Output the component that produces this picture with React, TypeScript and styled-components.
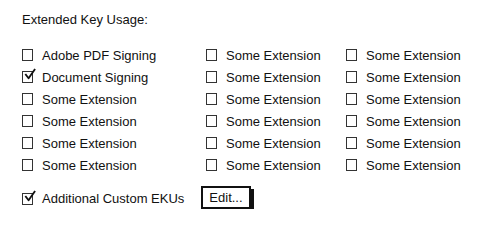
import React from "react";
import styled, { createGlobalStyle } from "styled-components";

const GlobalStyle = createGlobalStyle`
  body {
    margin: 0;
    background: #fff;
    font-family: "Liberation Sans", Arial, sans-serif;
    color: #111;
  }
`;

interface IOption {
  label: string;
  checked?: boolean;
}

const rows: IOption[][] = [
  [{ label: "Adobe PDF Signing" }, { label: "Some Extension" }, { label: "Some Extension" }],
  [{ label: "Document Signing", checked: true }, { label: "Some Extension" }, { label: "Some Extension" }],
  [{ label: "Some Extension" }, { label: "Some Extension" }, { label: "Some Extension" }],
  [{ label: "Some Extension" }, { label: "Some Extension" }, { label: "Some Extension" }],
  [{ label: "Some Extension" }, { label: "Some Extension" }, { label: "Some Extension" }],
  [{ label: "Some Extension" }, { label: "Some Extension" }, { label: "Some Extension" }],
];

const Check = ({ checked }: { checked?: boolean }): JSX.Element => (
  <Box>
    {checked && (
      <Tick viewBox="0 0 14 14">
        <path d="M2.5 6.5 L6 11 L13 1" fill="none" stroke="#111" strokeWidth="2" strokeLinejoin="round" />
      </Tick>
    )}
  </Box>
);

const App = (): JSX.Element => {
  return (
    <Page>
      <GlobalStyle />
      <Heading>Extended Key Usage:</Heading>
      <Grid>
        {rows.flat().map((opt, i) => (
          <Option key={i}>
            <Check checked={opt.checked} />
            <span>{opt.label}</span>
          </Option>
        ))}
      </Grid>
      <Footer>
        <Option>
          <Check checked />
          <span>Additional Custom EKUs</span>
        </Option>
        <Button>Edit...</Button>
      </Footer>
    </Page>
  );
};

export default App;

const Page = styled.div`
  padding: 11px 0 0 22px;
  font-size: 13px;
`;
const Heading = styled.div`
  height: 17px;
  line-height: 17px;
`;
const Grid = styled.div`
  display: grid;
  grid-template-columns: 184px 140px 140px;
  grid-auto-rows: 22px;
  margin-top: 16px;
`;
const Option = styled.div`
  display: flex;
  align-items: center;
  gap: 9px;
  white-space: nowrap;
`;
const Box = styled.div`
  position: relative;
  width: 9px;
  height: 10px;
  border: 1.5px solid #333;
  flex: 0 0 auto;
`;
const Tick = styled.svg`
  position: absolute;
  left: 0px;
  top: -4px;
  width: 13px;
  height: 13px;
`;
const Footer = styled.div`
  display: flex;
  align-items: center;
  gap: 17px;
  margin-top: 12px;
`;
const Button = styled.div`
  border: 2px solid #111;
  box-shadow: 3px 3px 0 #111;
  padding: 0 6px;
  height: 19px;
  line-height: 19px;
  margin-top: -2px;
`;
